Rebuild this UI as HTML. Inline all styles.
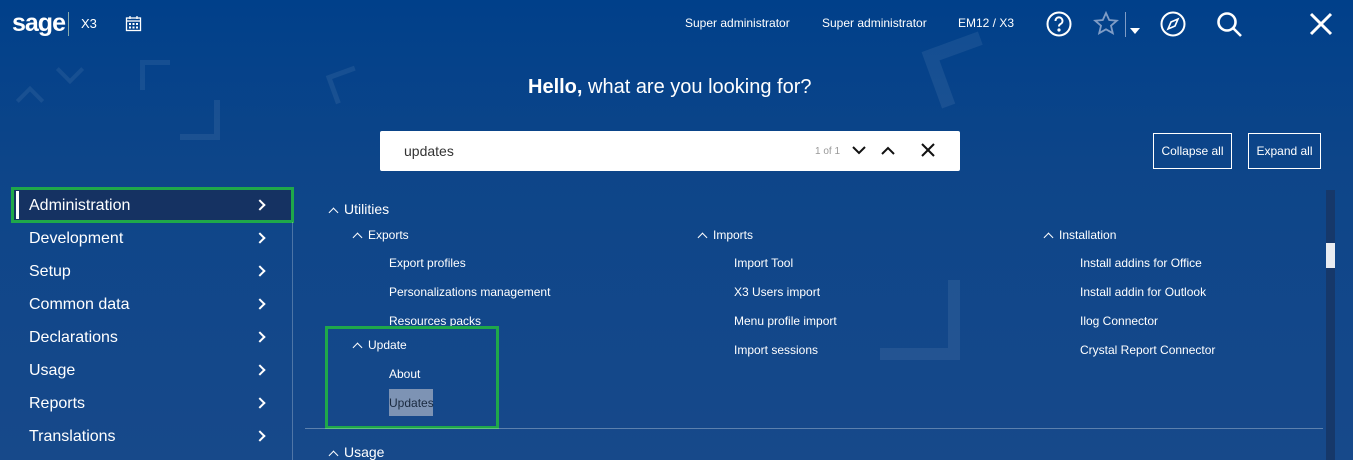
<!DOCTYPE html>
<html><head><meta charset="utf-8"><style>
*{margin:0;padding:0;box-sizing:border-box}
body{width:1353px;height:460px;overflow:hidden;font-family:"Liberation Sans",Arial,sans-serif;color:#fff;background:linear-gradient(180deg,#00408a 0%,#0d4589 35%,#17498a 100%);position:relative}
.a{position:absolute;white-space:nowrap}
.t{font-size:12px}
.side{font-size:16px}
.chev{position:absolute;width:8px;height:8px;border-top:2px solid #fff;border-right:2px solid #fff;transform:rotate(45deg)}
.up{display:inline-block;width:7px;height:7px;border-top:1.6px solid #fff;border-left:1.6px solid #fff;transform:rotate(45deg);margin-right:7px;position:relative;top:2px}
.btn{position:absolute;border:1px solid #fff;height:36px;top:133px;font-size:12px;line-height:34px;text-align:center}
.deco{position:absolute;border-color:rgba(255,255,255,0.07);border-style:solid;border-width:0}
</style></head><body>
<div class="deco" style="left:20px;top:90px;width:20px;height:20px;border-top-width:4px;border-left-width:4px;transform:rotate(45deg)"></div>
<div class="deco" style="left:60px;top:60px;width:20px;height:20px;border-bottom-width:4px;border-right-width:4px;transform:rotate(45deg)"></div>
<div class="deco" style="left:140px;top:60px;width:30px;height:30px;border-top-width:5px;border-left-width:5px"></div>
<div class="deco" style="left:180px;top:100px;width:40px;height:40px;border-bottom-width:6px;border-right-width:6px"></div>
<div class="deco" style="left:330px;top:70px;width:30px;height:30px;border-top-width:5px;border-left-width:5px;transform:rotate(-20deg)"></div>
<div class="deco" style="left:880px;top:280px;width:80px;height:80px;border-bottom-width:12px;border-right-width:12px"></div>
<div class="deco" style="left:930px;top:40px;width:60px;height:60px;border-top-width:14px;border-left-width:14px;transform:rotate(-20deg)"></div>

<div class="a" style="left:12px;top:9px;font-size:25px;font-weight:bold;letter-spacing:-1px">sage</div>
<div class="a" style="left:68px;top:12px;width:1px;height:24px;background:#8aa"></div>
<div class="a" style="left:81px;top:16px;font-size:13px">X3</div>
<svg class="a" style="left:125px;top:15px" width="17" height="17" viewBox="0 0 17 17" fill="none" stroke="#fff" stroke-width="1.3"><rect x="1.5" y="3" width="14" height="12.5"/><line x1="1.5" y1="6" x2="15.5" y2="6"/><line x1="5" y1="1" x2="5" y2="4"/><line x1="12" y1="1" x2="12" y2="4"/><g fill="#fff" stroke="none"><rect x="4" y="8" width="2" height="2"/><rect x="7.5" y="8" width="2" height="2"/><rect x="11" y="8" width="2" height="2"/><rect x="4" y="11.5" width="2" height="2"/><rect x="7.5" y="11.5" width="2" height="2"/><rect x="11" y="11.5" width="2" height="2"/></g></svg>

<div class="a t" style="left:685px;top:16px">Super administrator</div>
<div class="a t" style="left:822px;top:16px">Super administrator</div>
<div class="a t" style="left:958px;top:16px">EM12 / X3</div>
<svg class="a" style="left:1046px;top:11px" width="26" height="26" viewBox="0 0 26 26" fill="none" stroke="#fff" stroke-width="2"><circle cx="13" cy="13" r="11.5"/><path d="M9.5 10a3.5 3.5 0 1 1 5 3c-1.2.6-1.5 1.3-1.5 2.5"/><circle cx="13" cy="19" r=".6" fill="#fff"/></svg>
<svg class="a" style="left:1093px;top:11px" width="26" height="26" viewBox="0 0 26 26" fill="none" stroke="#7f9cc6" stroke-width="1.8"><path d="M13 2l3.2 7 7.6.7-5.8 5 1.8 7.5L13 18.3l-6.8 3.9 1.8-7.5-5.8-5 7.6-.7z"/></svg>
<div class="a" style="left:1125px;top:12px;width:1px;height:25px;background:#7f9cc6"></div>
<div class="a" style="left:1130px;top:28px;border-left:5px solid transparent;border-right:5px solid transparent;border-top:6px solid #fff"></div>
<svg class="a" style="left:1160px;top:11px" width="26" height="26" viewBox="0 0 26 26" fill="none" stroke="#fff" stroke-width="2"><circle cx="13" cy="13" r="11.5"/><path d="M18 8l-7 3-3 7 7-3z" stroke-width="1.6"/></svg>
<svg class="a" style="left:1216px;top:11px" width="27" height="27" viewBox="0 0 27 27" fill="none" stroke="#fff" stroke-width="2.6"><circle cx="11" cy="11" r="8.5"/><line x1="17" y1="17" x2="25" y2="25"/></svg>
<svg class="a" style="left:1309px;top:12px" width="24" height="24" viewBox="0 0 24 24" stroke="#fff" stroke-width="3"><line x1="2" y1="2" x2="22" y2="22"/><line x1="22" y1="2" x2="2" y2="22"/></svg>

<div class="a" style="left:528px;top:76px;font-size:20px"><b>Hello,</b> what are you looking for?</div>

<div class="a" style="left:380px;top:131px;width:580px;height:40px;background:#fff;border-radius:2px"></div>
<div class="a" style="left:404px;top:143px;font-size:14px;color:#333">updates</div>
<div class="a" style="left:815px;top:146px;font-size:10px;color:#999">1 of 1</div>
<svg class="a" style="left:852px;top:143px" width="50" height="16" viewBox="0 0 50 16" fill="none" stroke="#111" stroke-width="2"><path d="M1 4l6 6 6-6"/><path d="M30 11l6-6 6 6"/></svg>
<svg class="a" style="left:920px;top:142px" width="16" height="16" viewBox="0 0 16 16" stroke="#111" stroke-width="2"><line x1="2" y1="2" x2="14" y2="14"/><line x1="14" y1="2" x2="2" y2="14"/></svg>

<div class="btn" style="left:1153px;width:79px">Collapse all</div>
<div class="btn" style="left:1248px;width:73px">Expand all</div>

<div class="a" style="left:11px;top:187px;width:283px;height:36px;background:#153262;border:3px solid #1fa84a"></div>
<div class="a" style="left:16px;top:191px;width:3px;height:28px;background:#fff"></div>
<div class="a side" style="left:29px;top:197px">Administration</div><div class="chev" style="left:256px;top:201px"></div>
<div class="a side" style="left:29px;top:230px">Development</div><div class="chev" style="left:256px;top:234px"></div>
<div class="a side" style="left:29px;top:263px">Setup</div><div class="chev" style="left:256px;top:267px"></div>
<div class="a side" style="left:29px;top:296px">Common data</div><div class="chev" style="left:256px;top:300px"></div>
<div class="a side" style="left:29px;top:329px">Declarations</div><div class="chev" style="left:256px;top:333px"></div>
<div class="a side" style="left:29px;top:362px">Usage</div><div class="chev" style="left:256px;top:366px"></div>
<div class="a side" style="left:29px;top:395px">Reports</div><div class="chev" style="left:256px;top:399px"></div>
<div class="a side" style="left:29px;top:428px">Translations</div><div class="chev" style="left:256px;top:432px"></div>
<div class="a" style="left:292px;top:222px;width:1px;height:238px;background:rgba(255,255,255,0.25)"></div>

<div class="a" style="left:1326px;top:190px;width:9px;height:270px;background:#16386a"></div>
<div class="a" style="left:1326px;top:243px;width:9px;height:25px;background:#e8ecf2"></div>

<div class="a" style="left:330px;top:201px;font-size:14px"><span class="up"></span>Utilities</div>
<div class="a t" style="left:354px;top:228px"><span class="up"></span>Exports</div>
<div class="a t" style="left:389px;top:256px">Export profiles</div>
<div class="a t" style="left:389px;top:285px">Personalizations management</div>
<div class="a t" style="left:389px;top:314px">Resources packs</div>
<div class="a t" style="left:354px;top:338px"><span class="up"></span>Update</div>
<div class="a t" style="left:389px;top:367px">About</div>
<div class="a" style="left:389px;top:389px;width:44px;height:27px;background:#7d93b4"></div>
<div class="a t" style="left:389px;top:396px;color:#1a2a40">Updates</div>
<div class="a" style="left:325px;top:326px;width:174px;height:103px;border:3px solid #1fa84a"></div>
<div class="a" style="left:305px;top:428px;width:1018px;height:1px;background:rgba(255,255,255,0.3)"></div>
<div class="a" style="left:330px;top:444px;font-size:14px"><span class="up"></span>Usage</div>

<div class="a t" style="left:699px;top:228px"><span class="up"></span>Imports</div>
<div class="a t" style="left:734px;top:256px">Import Tool</div>
<div class="a t" style="left:734px;top:285px">X3 Users import</div>
<div class="a t" style="left:734px;top:314px">Menu profile import</div>
<div class="a t" style="left:734px;top:343px">Import sessions</div>

<div class="a t" style="left:1045px;top:228px"><span class="up"></span>Installation</div>
<div class="a t" style="left:1080px;top:256px">Install addins for Office</div>
<div class="a t" style="left:1080px;top:285px">Install addin for Outlook</div>
<div class="a t" style="left:1080px;top:314px">Ilog Connector</div>
<div class="a t" style="left:1080px;top:343px">Crystal Report Connector</div>
</body></html>
